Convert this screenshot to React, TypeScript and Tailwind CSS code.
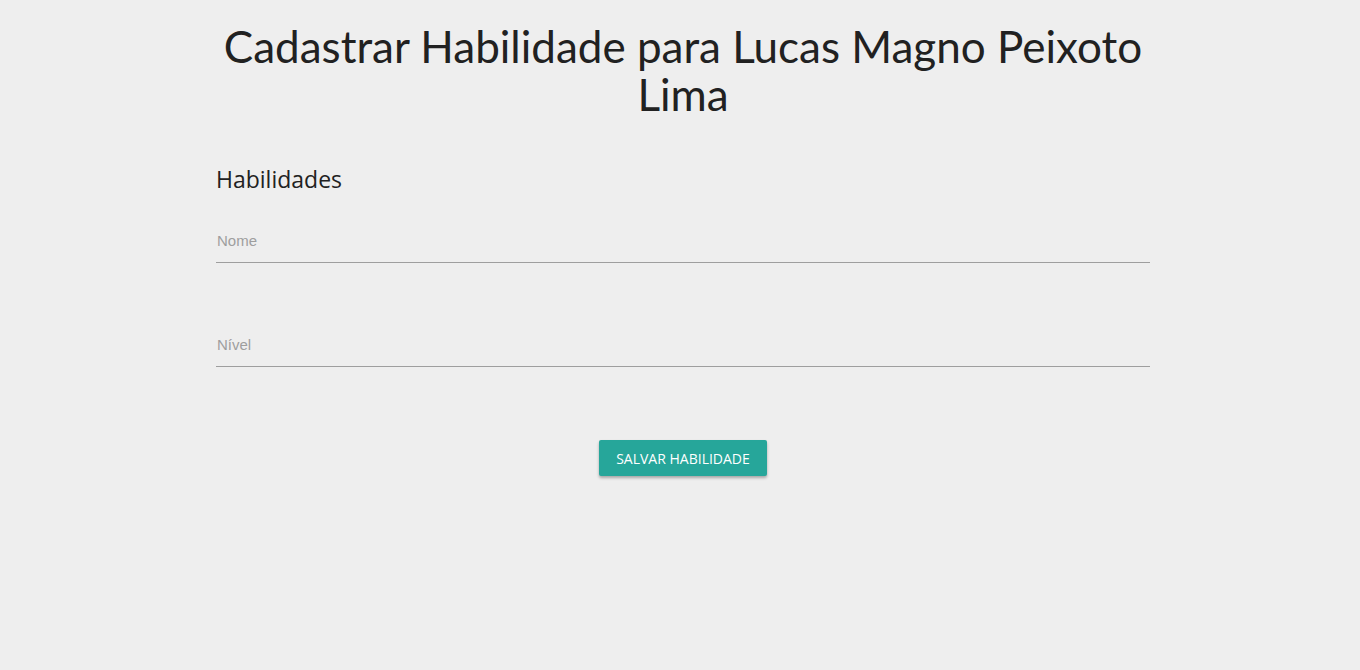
import React from "react";

const Field: React.FC<{ label: string }> = ({ label }) => (
  <div className="relative h-[48px]">
    <label className="absolute left-[1px] top-[15px] text-[15px] text-[#9e9e9e] font-['Liberation_Sans',Arial,sans-serif]">
      {label}
    </label>
    <input className="w-full h-full bg-transparent border-b border-[#9e9e9e] outline-none" />
  </div>
);

export default function App() {
  return (
    <div className="min-h-screen bg-[#eeeeee] font-['Open_Sans',sans-serif] text-[#212121]">
      <div className="ml-[216px] w-[934px] pt-[22px]">
        <h1 className="text-center text-[44px] leading-[48px] font-normal font-['Lato',sans-serif]">
          Cadastrar Habilidade para Lucas Magno Peixoto Lima
        </h1>
        <h2 className="mt-[46px] text-[23px] leading-[30px] font-normal">Habilidades</h2>
        <div className="mt-[21px] flex flex-col gap-[56px]">
          <Field label="Nome" />
          <Field label="Nível" />
        </div>
        <div className="mt-[73px] flex justify-center">
          <button className="h-[36px] w-[168px] rounded-[2px] bg-[#26a69a] text-[14px] text-white uppercase shadow-[0_2px_3px_rgba(0,0,0,0.3)]">
            Salvar Habilidade
          </button>
        </div>
      </div>
    </div>
  );
}
